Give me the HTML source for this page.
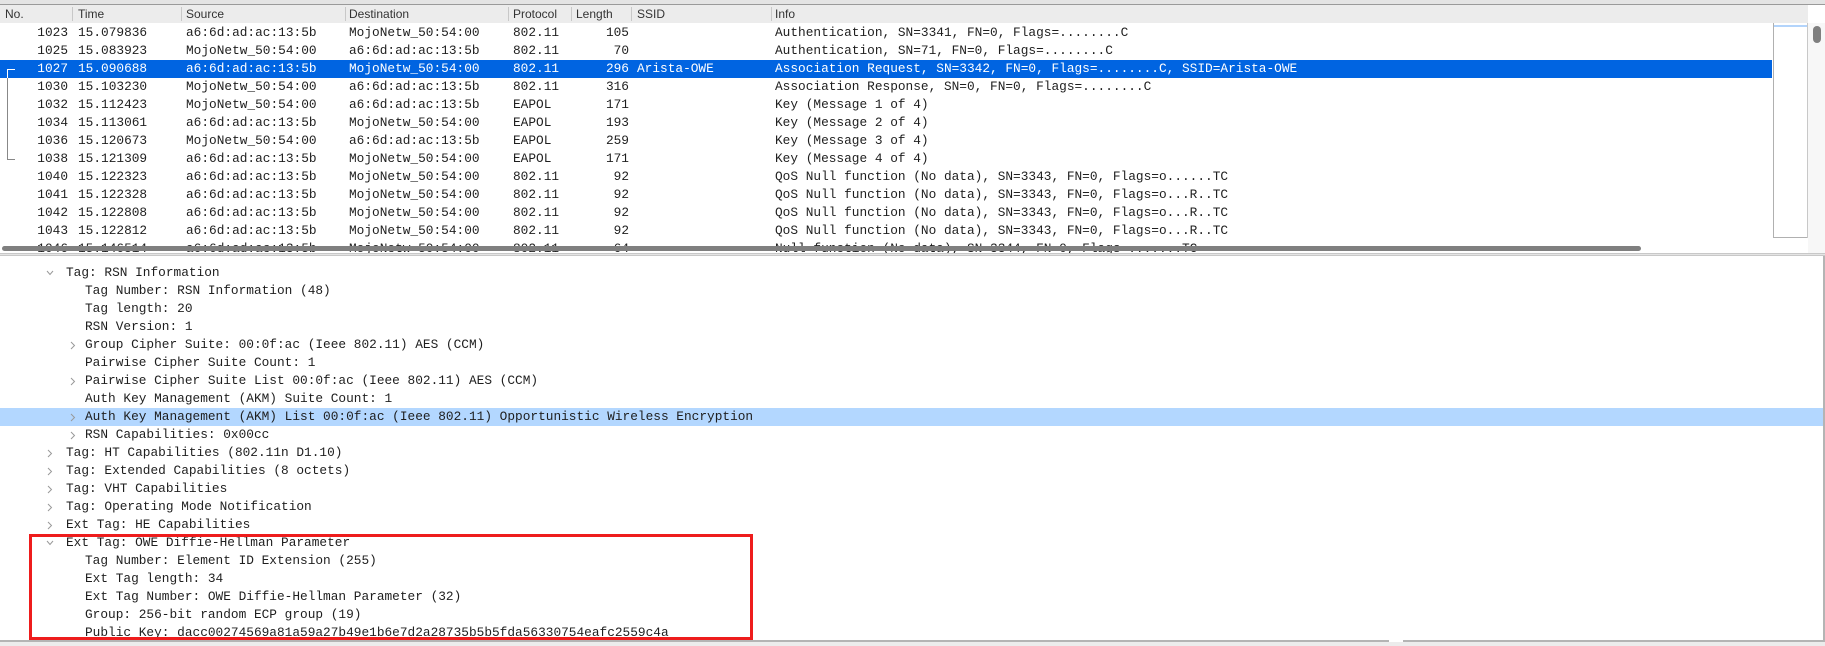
<!DOCTYPE html>
<html><head><meta charset="utf-8"><style>
*{margin:0;padding:0;box-sizing:border-box}
body{width:1825px;height:646px;background:#fff;position:relative;overflow:hidden;font-family:"Liberation Mono",monospace;font-size:12.8px;color:#1e1e1e}
.a{position:absolute;white-space:pre;line-height:18px}
.hdr{position:absolute;top:5px;left:0;width:1808px;height:18px;background:#ececec;font-family:"Liberation Sans",sans-serif;font-size:12px;color:#333}
.hdr span{position:absolute;top:2px}
.hdr i{position:absolute;top:2px;width:1px;height:14px;background:#c8c8c8}
.row{position:absolute;left:0;width:1772px;height:18px}
.sel{background:#0064e1;color:#fff}
.r{text-align:right}
</style></head><body>
<div style="position:absolute;top:0;left:0;width:1825px;height:4px;background:#e4e4e4"></div>
<div style="position:absolute;top:4px;left:0;width:1825px;height:1px;background:#9a9a9a"></div>
<div class="hdr">
<span style="left:5px">No.</span><i style="left:72px"></i>
<span style="left:78px">Time</span><i style="left:181px"></i>
<span style="left:186px">Source</span><i style="left:345px"></i>
<span style="left:349px">Destination</span><i style="left:508px"></i>
<span style="left:513px">Protocol</span><i style="left:571px"></i>
<span style="left:576px">Length</span><i style="left:631px"></i>
<span style="left:637px">SSID</span><i style="left:771px"></i>
<span style="left:775px">Info</span>
</div>
<div id="rows"></div>
<div style="position:absolute;left:1773px;top:23px;width:1px;height:215px;background:#b0b0b0"></div>
<div style="position:absolute;left:1774px;top:25px;width:33px;height:2px;background:#b3d4fb"></div>
<div style="position:absolute;left:1774px;top:237px;width:34px;height:1px;background:#b0b0b0"></div>
<div style="position:absolute;left:1807px;top:23px;width:1px;height:215px;background:#c8c8c8"></div>
<div style="position:absolute;left:1808px;top:23px;width:17px;height:230px;background:#f7f7f7"></div>
<div style="position:absolute;left:1813px;top:26px;width:8px;height:17px;border-radius:4px;background:#7f7f7f"></div>
<div style="position:absolute;left:2px;top:246px;width:1639px;height:5px;border-radius:3px;background:#7f7f7f"></div>
<div style="position:absolute;left:0;top:253px;width:1825px;height:3px;background:#e4e4e4;border-top:1px solid #c8c8c8;border-bottom:1px solid #c8c8c8"></div>
<div id="det"></div>
<div style="position:absolute;left:29px;top:534px;width:724px;height:106px;border:3px solid #ee1c1c"></div>
<div style="position:absolute;left:0;top:640px;width:1389px;height:2px;background:#b4b4b4"></div>
<div style="position:absolute;left:1403px;top:640px;width:422px;height:2px;background:#b4b4b4"></div>
<div style="position:absolute;left:1823px;top:256px;width:2px;height:386px;background:#b4b4b4"></div>
<div style="position:absolute;left:0;top:642px;width:1825px;height:4px;background:#ececec"></div>
<script>
var R=[
["1023","15.079836","a6:6d:ad:ac:13:5b","MojoNetw_50:54:00","802.11","105","","Authentication, SN=3341, FN=0, Flags=........C"],
["1025","15.083923","MojoNetw_50:54:00","a6:6d:ad:ac:13:5b","802.11","70","","Authentication, SN=71, FN=0, Flags=........C"],
["1027","15.090688","a6:6d:ad:ac:13:5b","MojoNetw_50:54:00","802.11","296","Arista-OWE","Association Request, SN=3342, FN=0, Flags=........C, SSID=Arista-OWE"],
["1030","15.103230","MojoNetw_50:54:00","a6:6d:ad:ac:13:5b","802.11","316","","Association Response, SN=0, FN=0, Flags=........C"],
["1032","15.112423","MojoNetw_50:54:00","a6:6d:ad:ac:13:5b","EAPOL","171","","Key (Message 1 of 4)"],
["1034","15.113061","a6:6d:ad:ac:13:5b","MojoNetw_50:54:00","EAPOL","193","","Key (Message 2 of 4)"],
["1036","15.120673","MojoNetw_50:54:00","a6:6d:ad:ac:13:5b","EAPOL","259","","Key (Message 3 of 4)"],
["1038","15.121309","a6:6d:ad:ac:13:5b","MojoNetw_50:54:00","EAPOL","171","","Key (Message 4 of 4)"],
["1040","15.122323","a6:6d:ad:ac:13:5b","MojoNetw_50:54:00","802.11","92","","QoS Null function (No data), SN=3343, FN=0, Flags=o......TC"],
["1041","15.122328","a6:6d:ad:ac:13:5b","MojoNetw_50:54:00","802.11","92","","QoS Null function (No data), SN=3343, FN=0, Flags=o...R..TC"],
["1042","15.122808","a6:6d:ad:ac:13:5b","MojoNetw_50:54:00","802.11","92","","QoS Null function (No data), SN=3343, FN=0, Flags=o...R..TC"],
["1043","15.122812","a6:6d:ad:ac:13:5b","MojoNetw_50:54:00","802.11","92","","QoS Null function (No data), SN=3343, FN=0, Flags=o...R..TC"],
["1046","15.146514","a6:6d:ad:ac:13:5b","MojoNetw_50:54:00","802.11","64","","Null function (No data), SN=3344, FN=0, Flags=.......TC"]];
var h="";
R.forEach(function(r,i){var t=24+i*18;var s=i==2?" sel":"";
var hh=i==12?"height:14px;overflow:hidden;":"";
h+='<div class="row'+s+'" style="top:'+t+'px;'+hh+'">'+
'<span class="a r" style="left:30px;width:38px">'+r[0]+'</span>'+
'<span class="a" style="left:78px">'+r[1]+'</span>'+
'<span class="a" style="left:186px">'+r[2]+'</span>'+
'<span class="a" style="left:349px">'+r[3]+'</span>'+
'<span class="a" style="left:513px">'+r[4]+'</span>'+
'<span class="a r" style="left:580px;width:49px">'+r[5]+'</span>'+
'<span class="a" style="left:637px">'+r[6]+'</span>'+
'<span class="a" style="left:775px">'+r[7]+'</span></div>';});
h+='<div style="position:absolute;left:7px;top:69px;width:1px;height:91px;background:#888"></div>';
h+='<div style="position:absolute;left:7px;top:69px;width:8px;height:1px;background:#fff"></div>';
h+='<div style="position:absolute;left:7px;top:69px;width:1px;height:9px;background:#fff"></div>';
h+='<div style="position:absolute;left:7px;top:159px;width:8px;height:1px;background:#888"></div>';
document.getElementById("rows").innerHTML=h;
var D=[
[1,"v","Tag: RSN Information"],
[2,"","Tag Number: RSN Information (48)"],
[2,"","Tag length: 20"],
[2,"","RSN Version: 1"],
[2,">","Group Cipher Suite: 00:0f:ac (Ieee 802.11) AES (CCM)"],
[2,"","Pairwise Cipher Suite Count: 1"],
[2,">","Pairwise Cipher Suite List 00:0f:ac (Ieee 802.11) AES (CCM)"],
[2,"","Auth Key Management (AKM) Suite Count: 1"],
[2,">","Auth Key Management (AKM) List 00:0f:ac (Ieee 802.11) Opportunistic Wireless Encryption"],
[2,">","RSN Capabilities: 0x00cc"],
[1,">","Tag: HT Capabilities (802.11n D1.10)"],
[1,">","Tag: Extended Capabilities (8 octets)"],
[1,">","Tag: VHT Capabilities"],
[1,">","Tag: Operating Mode Notification"],
[1,">","Ext Tag: HE Capabilities"],
[1,"v","Ext Tag: OWE Diffie-Hellman Parameter"],
[2,"","Tag Number: Element ID Extension (255)"],
[2,"","Ext Tag length: 34"],
[2,"","Ext Tag Number: OWE Diffie-Hellman Parameter (32)"],
[2,"","Group: 256-bit random ECP group (19)"],
[2,"","Public Key: dacc00274569a81a59a27b49e1b6e7d2a28735b5b5fda56330754eafc2559c4a"]];
h="";
D.forEach(function(d,i){var t=264+i*18;
if(i==8)h+='<div style="position:absolute;left:0;top:'+t+'px;width:1823px;height:18px;background:#b3d7ff"></div>';
var tx=d[0]==1?66:85,ax=d[0]==1?46:69;
if(d[1]=="v")h+='<svg style="position:absolute;left:'+ax+'px;top:'+(t+6)+'px" width="8" height="6"><path d="M1 1L4 4.5L7 1" stroke="#999" fill="none" stroke-width="1"/></svg>';
if(d[1]==">")h+='<svg style="position:absolute;left:'+(ax+1)+'px;top:'+(t+5)+'px" width="6" height="9"><path d="M1 1L4.5 4.5L1 8" stroke="#999" fill="none" stroke-width="1"/></svg>';
h+='<span class="a" style="left:'+tx+'px;top:'+t+'px">'+d[2]+'</span>';});
document.getElementById("det").innerHTML=h;
</script>
</body></html>
